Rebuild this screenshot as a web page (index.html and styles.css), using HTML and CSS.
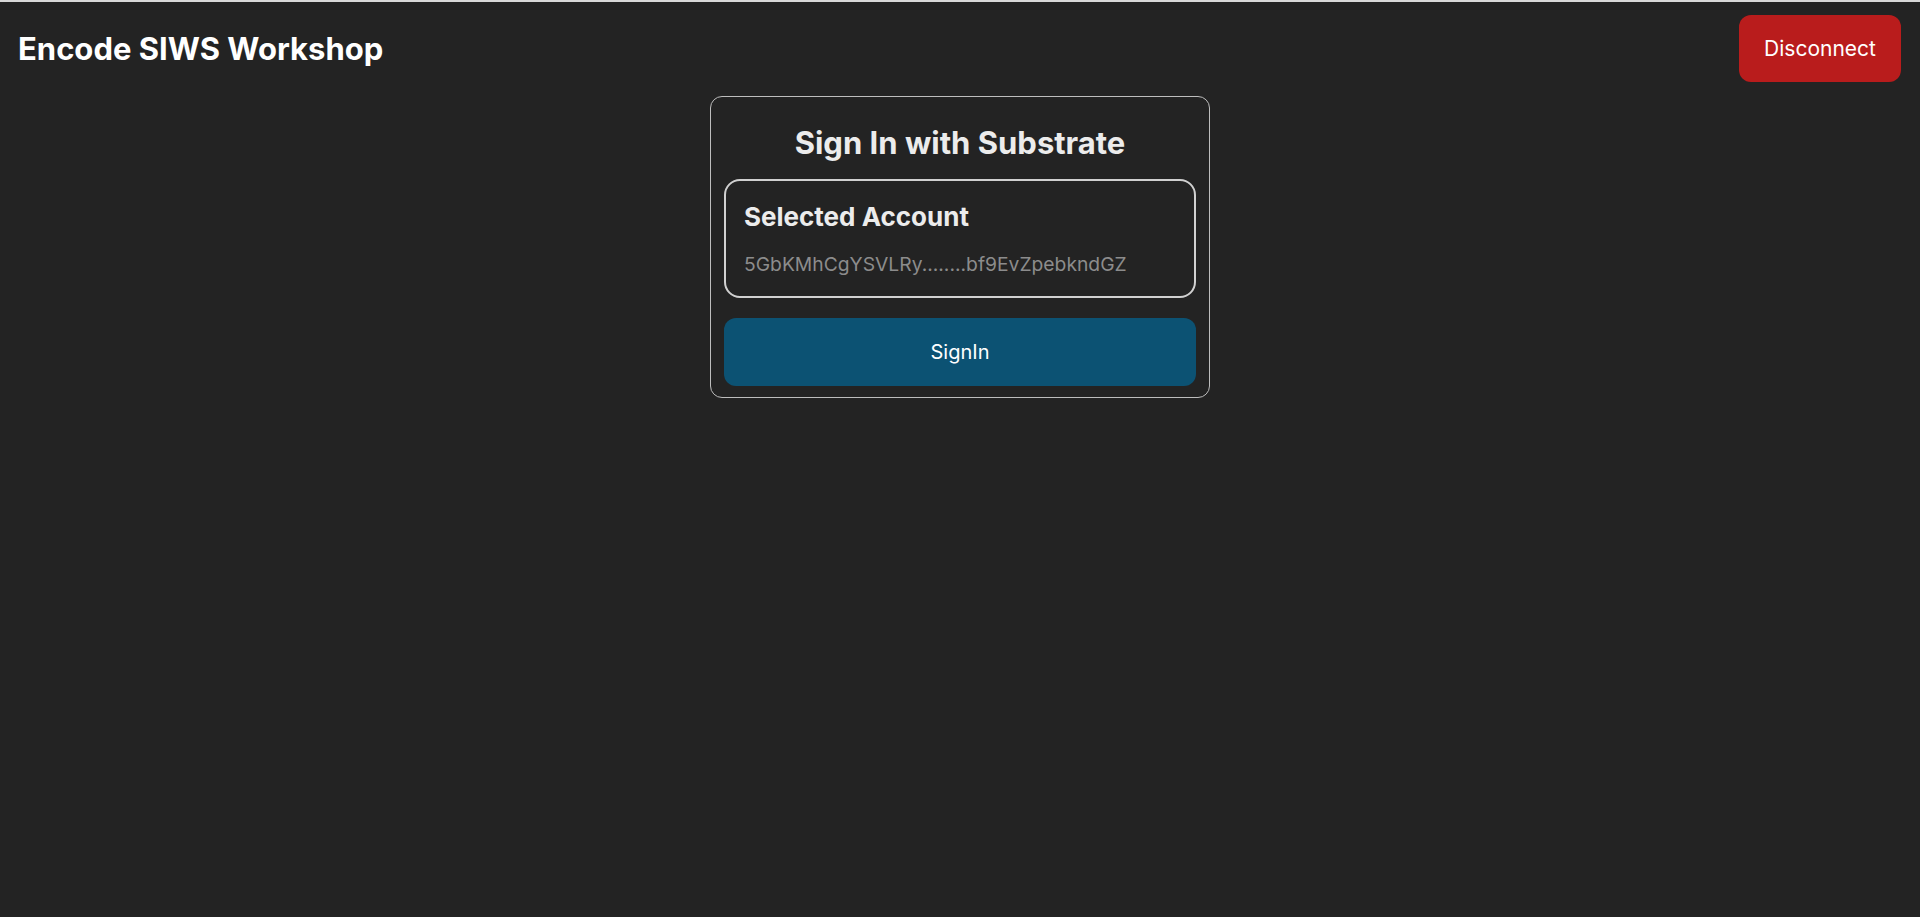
FILE: index.html
```html
<!DOCTYPE html>
<html lang="en">
<head>
    <meta charset="UTF-8">
    <meta name="viewport" content="width=device-width, initial-scale=1.0">
    <title>Encode SIWS Workshop</title>
    <link rel="stylesheet" href="styles.css">
</head>
<body>

    <header>
        <div class="logo">Encode SIWS Workshop</div>
        <button class="disconnect-btn">Disconnect</button>
    </header>

    <div class="container">
        <h2>Sign In with Substrate</h2>
        <div class="account-box">
            <h3>Selected Account</h3>
            <p class="address">5GbKMhCgYSVLRy........bf9EvZpebkndGZ</p>
        </div>
        <button class="signin-btn">SignIn</button>
    </div>

</body>
</html>
```

FILE: styles.css
```css
/* General Styles */
body, html {
    margin: 0;
    padding: 0;
    font-family: "Inter", "Open Sans", sans-serif;
    background-color: #232323;
    color: #e8e8e8;
}

body {
    border-top: 2px solid #d8d8d8;
    min-height: 915px;
}

/* Header Styles */
header {
    display: flex;
    justify-content: space-between;
    align-items: center;
    padding: 13px 19px 14px 18px;
}

header .logo {
    font-size: 31px;
    font-weight: 700;
    color: #ffffff;
}

button {
    border: none;
    cursor: pointer;
    font-family: inherit;
    color: #ffffff;
}

.disconnect-btn {
    background-color: #b91c1c;
    width: 162px;
    height: 67px;
    font-size: 21px;
    border-radius: 12px;
}

/* Card styles */
.container {
    width: 500px;
    box-sizing: border-box;
    margin: 0 auto;
    padding: 27px 13px 11px;
    border: 1px solid #bdbdbd;
    border-radius: 12px;
}

h2 {
    margin: 0 0 17px;
    text-align: center;
    font-size: 31px;
    line-height: 38px;
    font-weight: 700;
    color: #ececec;
}

.account-box {
    border: 2px solid #d0d0d0;
    border-radius: 16px;
    padding: 20px 18px 18px;
}

.account-box h3 {
    margin: 0 0 17px;
    font-size: 26px;
    line-height: 32px;
    font-weight: 700;
    color: #ececec;
}

.address {
    margin: 0;
    font-size: 19.3px;
    line-height: 28px;
    color: #8c8c8c;
}

.signin-btn {
    display: block;
    width: 100%;
    height: 68px;
    margin-top: 20px;
    background-color: #0c5273;
    border-radius: 12px;
    font-size: 20px;
}
```
